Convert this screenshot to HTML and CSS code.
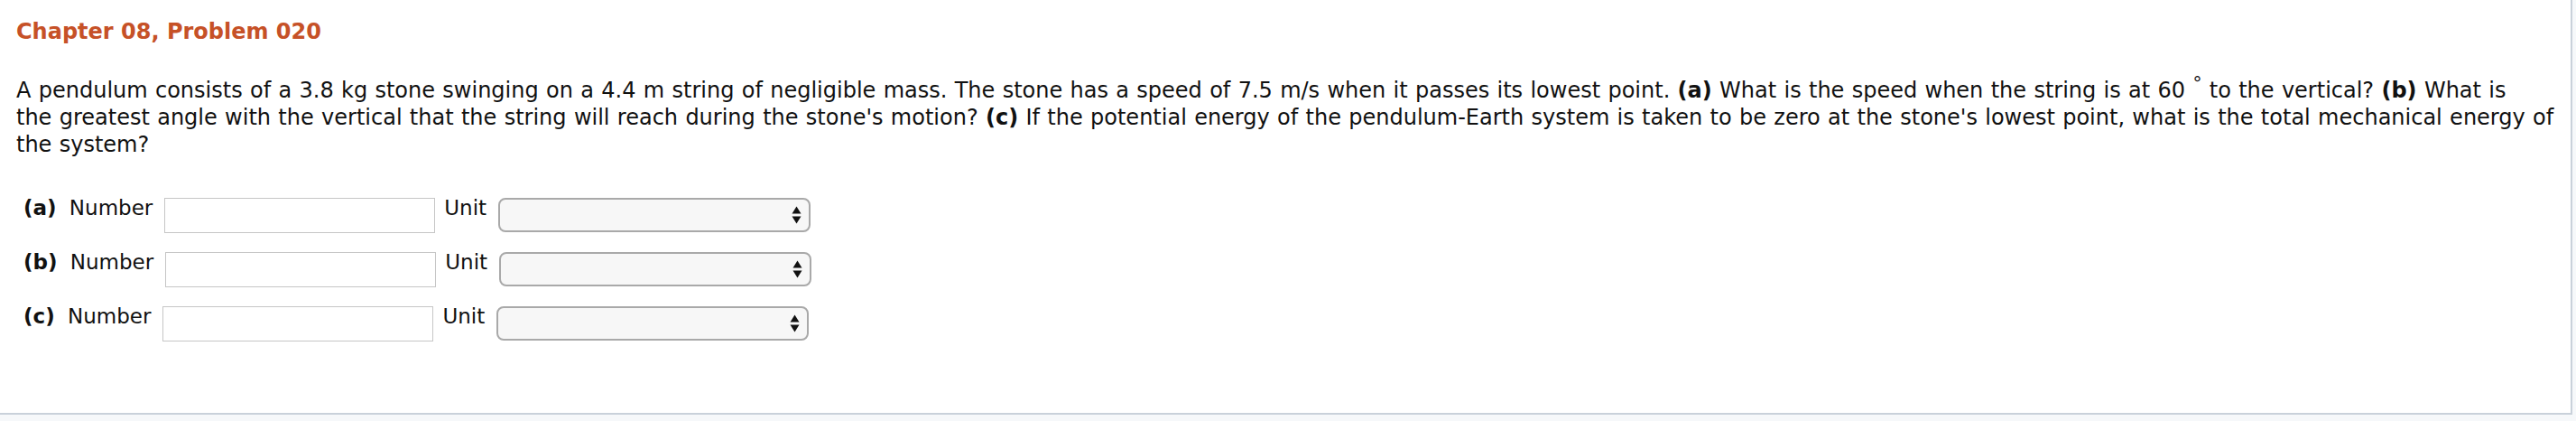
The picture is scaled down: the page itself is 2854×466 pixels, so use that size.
FILE: index.html
```html
<!DOCTYPE html>
<html lang="en">
<head>
<meta charset="utf-8">
<title>Chapter 08, Problem 020</title>
<link rel="stylesheet" href="styles.css">
</head>
<body>
<div class="panel">
  <h1 class="title">Chapter 08, Problem 020</h1>
  <p class="question">A pendulum consists of a 3.8 kg stone swinging on a 4.4 m string of negligible mass. The stone has a speed of 7.5 m/s when it passes its lowest point. <b>(a)</b> What is the speed when the string is at 60 <sup>°</sup> to the vertical? <b>(b)</b> What is<br>the greatest angle with the vertical that the string will reach during the stone's motion? <b>(c)</b> If the potential energy of the pendulum-Earth system is taken to be zero at the stone's lowest point, what is the total mechanical energy of<br>the system?</p>
  <div class="answers">
    <div class="row">
      <span class="label"><b>(a)</b> Number</span>
      <span class="num"></span>
      <span class="unit">Unit</span>
      <span class="select"><svg class="arrows" width="11" height="20" viewBox="0 0 11 20"><polygon points="0.5,8.5 5.5,0.5 10.5,8.5"/><polygon points="0.5,11.5 10.5,11.5 5.5,19.5"/></svg></span>
    </div>
    <div class="row">
      <span class="label"><b>(b)</b> Number</span>
      <span class="num"></span>
      <span class="unit">Unit</span>
      <span class="select"><svg class="arrows" width="11" height="20" viewBox="0 0 11 20"><polygon points="0.5,8.5 5.5,0.5 10.5,8.5"/><polygon points="0.5,11.5 10.5,11.5 5.5,19.5"/></svg></span>
    </div>
    <div class="row">
      <span class="label"><b>(c)</b> Number</span>
      <span class="num"></span>
      <span class="unit">Unit</span>
      <span class="select"><svg class="arrows" width="11" height="20" viewBox="0 0 11 20"><polygon points="0.5,8.5 5.5,0.5 10.5,8.5"/><polygon points="0.5,11.5 10.5,11.5 5.5,19.5"/></svg></span>
    </div>
  </div>
</div>
</body>
</html>
```
FILE: styles.css
```css
html, body {
  margin: 0;
  padding: 0;
}
body {
  background: #f6f8fa;
  font-family: "DejaVu Sans", Verdana, sans-serif;
  color: #111;
}
.panel {
  width: 2850px;
  height: 459px;
  box-sizing: border-box;
  background: #fff;
  border-right: 2px solid #c9d1da;
  border-bottom: 2px solid #c9d1da;
  padding: 21px 8px 0 18px;
}
.title {
  margin: 0;
  font-size: 24px;
  line-height: 29px;
  font-weight: bold;
  color: #c65127;
}
.question {
  margin: 35px 0 0;
  font-size: 24px;
  line-height: 30px;
  word-spacing: 0.7px;
}
.question sup {
  font-size: 20px;
  line-height: 0;
}
.answers {
  margin: 44px 0 0 8px;
  display: flex;
  flex-direction: column;
  gap: 21px;
}
.row {
  display: flex;
  align-items: flex-start;
  font-size: 23px;
  line-height: 23px;
}
.label b {
  margin-right: 7px;
}
.num {
  width: 300px;
  height: 39px;
  box-sizing: border-box;
  border: 1px solid #c6c6c6;
  background: #fff;
  margin-left: 13px;
}
.unit {
  margin-left: 10px;
}
.select {
  width: 346px;
  height: 38px;
  box-sizing: border-box;
  border: 2px solid #a9a9a9;
  border-radius: 8px;
  background: #f7f7f7;
  margin-left: 13px;
  display: flex;
  align-items: center;
  justify-content: flex-end;
  padding-right: 8px;
}
.arrows {
  display: block;
  fill: #111;
}
```
